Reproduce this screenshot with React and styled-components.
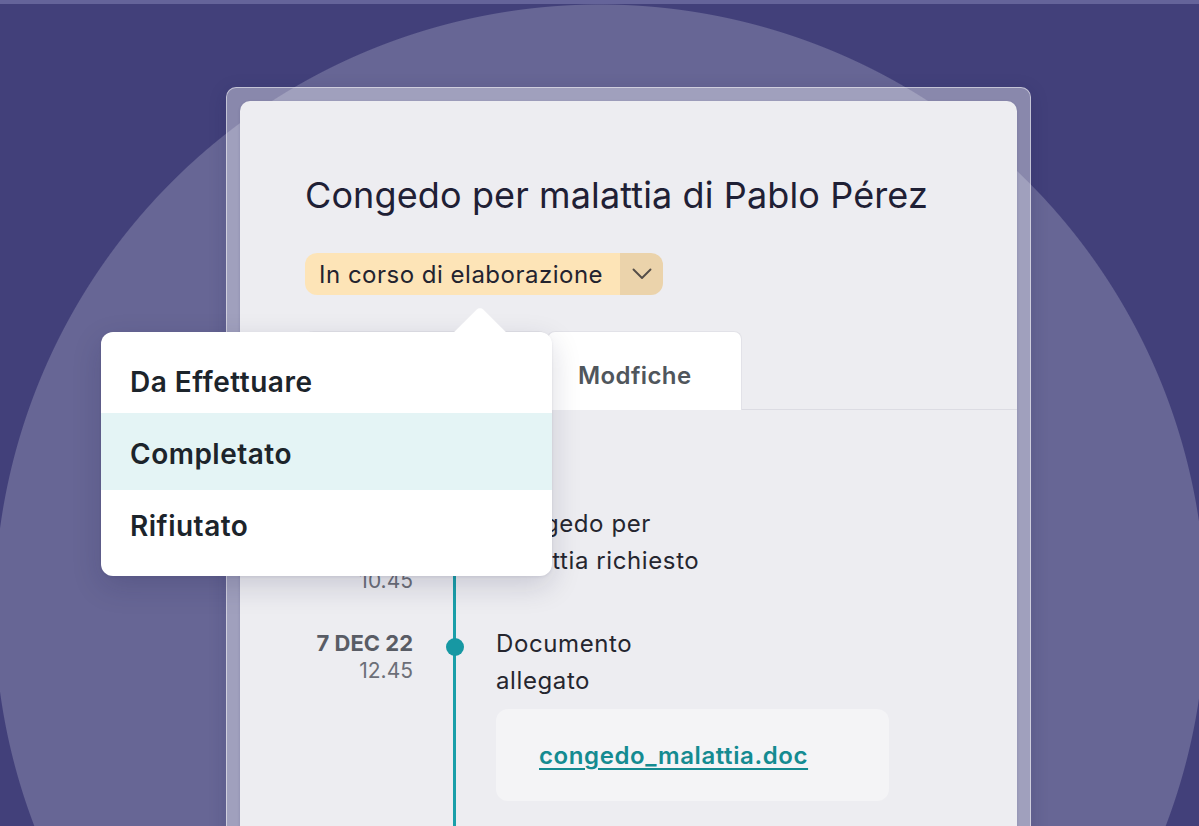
import React from "react";
import styled, { createGlobalStyle } from "styled-components";

const Global = createGlobalStyle`
  html, body { margin: 0; padding: 0; }
  body {
    width: 1199px;
    height: 826px;
    overflow: hidden;
    font-family: Inter, "Noto Sans", "Liberation Sans", sans-serif;
    background: #42407a;
  }
  * { box-sizing: border-box; }
`;

const Page = styled.div`
  width: 1199px;
  height: 826px;
  overflow: hidden;
  border-top: 4px solid #65649a;
  background:
    radial-gradient(circle 606px at 600px 606px, #676695 605px, #42407a 606px);
  padding: 83px 0 0 226px;
`;

const Frame = styled.div`
  width: 805px;
  min-height: 900px;
  padding: 14px;
  border-radius: 10px;
  background: rgba(255, 255, 255, 0.38);
  border: 1px solid rgba(255, 255, 255, 0.5);
  box-shadow: 0 4px 18px rgba(30, 28, 80, 0.18);
`;

const Card = styled.div`
  min-height: 860px;
  margin: -1px;
  border-radius: 10px;
  background: #ededf1;
  padding-top: 74px;
  box-shadow: 0 1px 3px rgba(30, 28, 80, 0.15);
`;

const Header = styled.div`
  padding-left: 65px;
`;

const Title = styled.h1`
  margin: 0;
  font-size: 36px;
  line-height: 40px;
  font-weight: 400;
  color: #1f2035;
  letter-spacing: 0.12px;
`;

const StatusWrap = styled.div`
  position: relative;
  display: inline-flex;
  margin-top: 38px;
`;

const Pill = styled.div`
  display: flex;
  height: 42px;
  border-radius: 12px;
  overflow: hidden;
`;

const PillLabel = styled.span`
  display: flex;
  align-items: center;
  padding: 0 17px 0 14px;
  background: #fde4b7;
  font-size: 24px;
  letter-spacing: 0.5px;
  color: #23232f;
`;

const PillToggle = styled.span`
  display: flex;
  align-items: center;
  justify-content: center;
  width: 43px;
  background: #ebd3ab;
  color: #544d47;
`;

const Menu = styled.div`
  position: absolute;
  z-index: 5;
  top: 79px;
  left: -204px;
  width: 451px;
  padding: 9px 0 14px;
  background: #ffffff;
  border-radius: 12px;
  box-shadow: 0 10px 30px rgba(20, 20, 60, 0.16), 0 1px 3px rgba(20, 20, 60, 0.08);
`;

const MenuArrow = styled.div`
  position: absolute;
  top: -18px;
  left: 360px;
  width: 38px;
  height: 38px;
  background: #ffffff;
  border-radius: 5px 0 0 0;
  transform: rotate(45deg);
`;

const MenuItem = styled.div`
  position: relative;
  display: flex;
  align-items: center;
  height: ${(p) => p.$h}px;
  padding: ${(p) => p.$pt}px 0 0 29px;
  font-size: 28px;
  letter-spacing: 0.5px;
  font-weight: 600;
  color: #1c242b;
  background: ${(p) => (p.$active ? "#e4f4f5" : "transparent")};
`;

const Tabs = styled.div`
  display: flex;
  margin-top: 36px;
  padding-left: 65px;
  border-bottom: 1px solid #dcdce3;
`;

const Tab = styled.div`
  display: flex;
  align-items: center;
  width: ${(p) => p.$w}px;
  height: 79px;
  padding: 8px 0 0 30px;
  margin-bottom: -1px;
  background: #ffffff;
  border: 1px solid #e2e2e8;
  border-bottom: none;
  border-radius: 8px 8px 0 0;
  font-size: 24px;
  letter-spacing: 0.4px;
  font-weight: 600;
  color: #50565c;
`;

const Timeline = styled.div`
  padding: 95px 0 0 65px;
`;

const Row = styled.div`
  display: grid;
  grid-template-columns: 108px 83px 1fr;
  padding-bottom: ${(p) => p.$gap}px;
  background: linear-gradient(#1a9fa9, #1a9fa9) 148px 0 / 3px 100% no-repeat;
`;

const DateCell = styled.div`
  text-align: right;
  padding-top: ${(p) => p.$offset}px;
`;

const DateText = styled.div`
  font-size: 22px;
  line-height: 28px;
  font-weight: 700;
  color: #595c65;
`;

const TimeText = styled.div`
  font-size: 21px;
  line-height: 28px;
  font-weight: 400;
  color: #6c6f78;
`;

const Rail = styled.div`
  display: flex;
  justify-content: center;
  padding-top: 13px;
  padding-left: 1px;
`;

const Dot = styled.div`
  width: 18px;
  height: 18px;
  border-radius: 50%;
  background: #1798a3;
`;

const Content = styled.div`
  font-size: 24px;
  line-height: 37px;
  letter-spacing: 0.6px;
  color: #25262f;
`;

const FileBox = styled.div`
  width: 393px;
  height: 92px;
  margin-top: 10px;
  padding-left: 43px;
  display: flex;
  align-items: center;
  border-radius: 12px;
  background: #f4f4f6;
`;

const FileLink = styled.a`
  font-size: 24px;
  font-weight: 600;
  letter-spacing: 0.6px;
  color: #148b91;
  text-decoration: underline;
  text-decoration-thickness: 2px;
  text-underline-offset: 4px;
`;

const Chevron = () => (
  <svg width="20" height="12" viewBox="0 0 20 12" fill="none">
    <path d="M1.5 1.5l8.5 8.5 8.5-8.5" stroke="currentColor" strokeWidth="1.9" strokeLinecap="round" strokeLinejoin="round" />
  </svg>
);

export default function App() {
  return (
    <>
      <Global />
      <Page>
        <Frame>
          <Card>
            <Header>
              <Title>Congedo per malattia di Pablo Pérez</Title>
              <StatusWrap>
                <Pill>
                  <PillLabel>In corso di elaborazione</PillLabel>
                  <PillToggle>
                    <Chevron />
                  </PillToggle>
                </Pill>
                <Menu>
                  <MenuArrow />
                  <MenuItem $h={72} $pt={10}>Da Effettuare</MenuItem>
                  <MenuItem $h={77} $pt={4} $active>Completato</MenuItem>
                  <MenuItem $h={72} $pt={0}>Rifiutato</MenuItem>
                </Menu>
              </StatusWrap>
            </Header>
            <Tabs>
              <Tab $w={242}>Attività</Tab>
              <Tab $w={195}>Modfiche</Tab>
            </Tabs>
            <Timeline>
              <Row $gap={30}>
                <DateCell $offset={34}>
                  <DateText>6 DEC 22</DateText>
                  <TimeText>10.45</TimeText>
                </DateCell>
                <Rail>
                  <Dot />
                </Rail>
                <Content>
                  Congedo per
                  <br />
                  malattia richiesto
                </Content>
              </Row>
              <Row $gap={120}>
                <DateCell $offset={4}>
                  <DateText>7 DEC 22</DateText>
                  <TimeText>12.45</TimeText>
                </DateCell>
                <Rail>
                  <Dot />
                </Rail>
                <Content>
                  Documento
                  <br />
                  allegato
                  <FileBox>
                    <FileLink href="#">congedo_malattia.doc</FileLink>
                  </FileBox>
                </Content>
              </Row>
            </Timeline>
          </Card>
        </Frame>
      </Page>
    </>
  );
}
